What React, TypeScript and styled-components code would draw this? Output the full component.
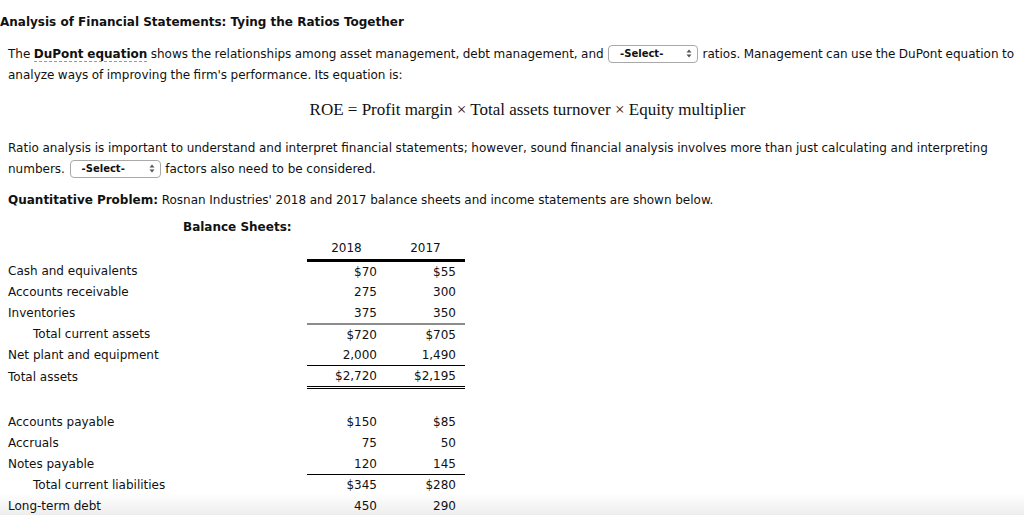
import React from "react";
import styled, { createGlobalStyle } from "styled-components";

const Global = createGlobalStyle`
  html, body { margin: 0; padding: 0; background: #fff; }
  body {
    font-family: "DejaVu Sans", Verdana, sans-serif;
    font-size: 12px;
    color: #111;
  }
`;

const Page = styled.div`
  position: relative;
  width: 1024px;
  height: 515px;
  overflow: hidden;
`;

const Title = styled.h1`
  margin: 0;
  padding: 14px 0 0 0;
  font-size: 12px;
  line-height: 16px;
  font-weight: bold;
`;

const Body = styled.div`
  padding: 0 8px;
`;

const Para = styled.p<{ $top: number; $ws?: number }>`
  margin: ${(p) => p.$top}px 0 0 0;
  line-height: 21px;
  word-spacing: ${(p) => p.$ws ?? -0.15}px;
`;

const Term = styled.b`
  border-bottom: 1px dashed #999;
`;

const Equation = styled.div`
  margin-top: 13px;
  padding-left: 31px;
  text-align: center;
  font-family: "Liberation Serif", "Times New Roman", serif;
  font-size: 17px;
  line-height: 21px;
`;

const SelectBox = styled.span<{ $w: number }>`
  display: inline-flex;
  align-items: center;
  justify-content: space-between;
  box-sizing: border-box;
  width: ${(p) => p.$w}px;
  height: 18px;
  padding: 0 5px 0 11px;
  margin: 0 1px;
  vertical-align: middle;
  border: 1px solid #a9a9a9;
  border-radius: 4px;
  background: #fff;
  font-size: 10px;
  font-weight: bold;
  line-height: 16px;
  word-spacing: 0;
  position: relative;
  top: -1px;
`;

const Caption = styled.div`
  margin: 6px 0 0 175px;
  font-weight: bold;
  line-height: 21px;
`;

const Table = styled.table`
  border-collapse: collapse;
  margin-top: -2px;
`;

const LabelCell = styled.td<{ $indent?: boolean; $h?: number }>`
  width: 299px;
  height: ${(p) => p.$h ?? 21}px;
  padding: 0 0 0 ${(p) => (p.$indent ? 25 : 0)}px;
  box-sizing: border-box;
  white-space: nowrap;
`;

type Rule = "gray" | "thin" | "double" | undefined;

const ValueCell = styled.td<{ $top?: Rule; $bottom?: Rule }>`
  width: 79px;
  padding: 0 9px 0 0;
  box-sizing: border-box;
  text-align: right;
  border-top: ${(p) =>
    p.$top === "gray" ? "2px solid #8c8c8c" : p.$top === "thin" ? "1px solid #000" : "none"};
  border-bottom: ${(p) => (p.$bottom === "double" ? "3px double #000" : "none")};
`;

const HeadCell = styled.th`
  width: 79px;
  height: 23px;
  padding: 0;
  text-align: center;
  font-weight: normal;
  border-bottom: 3px solid #000;
`;

const Fade = styled.div`
  position: absolute;
  left: 0;
  right: 0;
  bottom: 0;
  height: 22px;
  background: linear-gradient(to bottom, rgba(0, 0, 0, 0), rgba(0, 0, 0, 0.07));
  pointer-events: none;
`;

const Arrows = () => (
  <svg width="6" height="9" viewBox="0 0 6 9">
    <path d="M3 0.5 L5.5 3.5 L0.5 3.5 Z M3 8.5 L5.5 5.5 L0.5 5.5 Z" fill="#555" />
  </svg>
);

const Select = ({ w }: { w: number }) => (
  <SelectBox $w={w}>
    <span>-Select-</span>
    <Arrows />
  </SelectBox>
);

type Row = {
  label: string;
  a: string;
  b: string;
  indent?: boolean;
  top?: Rule;
  bottom?: Rule;
  h?: number;
};

const rows: (Row | null)[] = [
  { label: "Cash and equivalents", a: "$70", b: "$55" },
  { label: "Accounts receivable", a: "275", b: "300" },
  { label: "Inventories", a: "375", b: "350" },
  { label: "Total current assets", a: "$720", b: "$705", indent: true, top: "gray" },
  { label: "Net plant and equipment", a: "2,000", b: "1,490" },
  { label: "Total assets", a: "$2,720", b: "$2,195", top: "thin", bottom: "double", h: 22 },
  null,
  { label: "Accounts payable", a: "$150", b: "$85" },
  { label: "Accruals", a: "75", b: "50" },
  { label: "Notes payable", a: "120", b: "145" },
  { label: "Total current liabilities", a: "$345", b: "$280", indent: true, top: "thin" },
  { label: "Long-term debt", a: "450", b: "290" },
];

export default function App() {
  return (
    <Page>
      <Global />
      <Title>Analysis of Financial Statements: Tying the Ratios Together</Title>
      <Body>
        <Para $top={14} $ws={-0.4}>
          The <Term>DuPont equation</Term> shows the relationships among asset management, debt
          management, and <Select w={90} /> ratios. Management can use the DuPont equation to
          analyze ways of improving the firm's performance. Its equation is:
        </Para>
        <Equation>ROE = Profit margin × Total assets turnover × Equity multiplier</Equation>
        <Para $top={18}>
          Ratio analysis is important to understand and interpret financial statements; however,
          sound financial analysis involves more than just calculating and interpreting numbers.{" "}
          <Select w={91} /> factors also need to be considered.
        </Para>
        <Para $top={10}>
          <b>Quantitative Problem:</b> Rosnan Industries' 2018 and 2017 balance sheets and income
          statements are shown below.
        </Para>
        <Caption>Balance Sheets:</Caption>
        <Table>
          <thead>
            <tr>
              <LabelCell as="th" $h={23} />
              <HeadCell>2018</HeadCell>
              <HeadCell>2017</HeadCell>
            </tr>
          </thead>
          <tbody>
            {rows.map((r, i) =>
              r ? (
                <tr key={i}>
                  <LabelCell $indent={r.indent} $h={r.h}>
                    {r.label}
                  </LabelCell>
                  <ValueCell $top={r.top} $bottom={r.bottom}>
                    {r.a}
                  </ValueCell>
                  <ValueCell $top={r.top} $bottom={r.bottom}>
                    {r.b}
                  </ValueCell>
                </tr>
              ) : (
                <tr key={i}>
                  <LabelCell $h={24} />
                  <ValueCell />
                  <ValueCell />
                </tr>
              )
            )}
          </tbody>
        </Table>
      </Body>
      <Fade />
    </Page>
  );
}
